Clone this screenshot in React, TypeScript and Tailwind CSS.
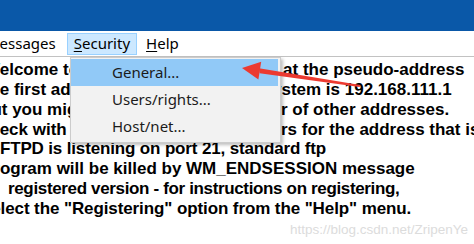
import React from "react"

const bodyFont = { fontFamily: '"Liberation Sans", Arial, sans-serif' }
const uiFont = { fontFamily: '"Noto Sans", "Open Sans", sans-serif' }

// lines that run under the dropdown: a left piece and a right piece
const splitLines = [
  { left: "Welcome to the FTP-Serv. It is now runnin", lm: "-ml-[16px]", right: "n at the pseudo-address", rm: "-ml-[13px]" },
  { left: "The first address of your sy", lm: "-ml-[21px]", right: "ystem is 192.168.111.1", rm: "-ml-[9px]" },
  { left: "but you might have a numbe", lm: "-ml-[19px]", right: "r of other addresses.", rm: "ml-0" },
  { left: "Check with your network admin", lm: "-ml-[23px]", right: "rs for the address that is", rm: "ml-0" },
]

const fullLines = [
  { text: "This FTPD is listening on port 21, standard ftp", cls: "-ml-[39px] tracking-[-0.15px]" },
  { text: "Program will be killed by WM_ENDSESSION message", cls: "-ml-[18px]" },
  { text: "registered version - for instructions on registering,", cls: "ml-[8px] tracking-[-0.35px]" },
  { text: "Select the \"Registering\" option from the \"Help\" menu.", cls: "-ml-[20px] tracking-[-0.1px]" },
]

const menuItems = ["General...", "Users/rights...", "Host/net..."]

export default function App() {
  return (
    <div className="relative w-[474px] h-[244px] overflow-hidden bg-white">
      {/* title bar */}
      <div className="h-[31px] bg-[#0a58a8]" />

      {/* menu bar */}
      <div className="h-[25px] flex items-center text-[15px] text-black" style={uiFont}>
        <span className="-ml-[14px] pr-[11px]">Messages</span>
        <span className="h-[22px] flex items-center px-[6px] bg-[#cce8ff] border border-[#99d1ff]">
          <span className="underline underline-offset-2 decoration-1">S</span>ecurity
        </span>
        <span className="ml-[9px]">
          <span className="underline underline-offset-2 decoration-1">H</span>elp
        </span>
      </div>

      {/* text area */}
      <div className="border-t border-[#c2c2c2] pt-[3px] text-[17px] font-bold leading-[19.85px] text-black" style={bodyFont}>
        {splitLines.map((l, i) => (
          <div key={i} className="flex whitespace-nowrap">
            <div className="w-[281px] shrink-0 overflow-hidden">
              <div className={l.lm}>{l.left}</div>
            </div>
            <div className={l.rm}>{l.right}</div>
          </div>
        ))}
        {fullLines.map((l, i) => (
          <div key={i} className={`whitespace-nowrap ${l.cls}`}>
            {l.text}
          </div>
        ))}
      </div>

      {/* dropdown */}
      <div
        className="absolute left-[70px] top-[57px] w-[211px] bg-[#f2f2f2] border border-[#cccccc] pt-[1px] pb-[2px] shadow-[2px_2px_3px_rgba(0,0,0,0.25)] text-[15px] text-[#1b1b1b]"
        style={uiFont}
      >
        {menuItems.map((m, i) => (
          <div
            key={m}
            className={`h-[27px] mr-[2px] flex items-center pl-[41px] ${i === 0 ? "bg-[#91c9f7]" : ""}`}
          >
            {m}
          </div>
        ))}
      </div>

      {/* red arrow */}
      <svg className="absolute left-0 top-0" width="474" height="244" viewBox="0 0 474 244">
        <polygon points="259,68.2 360.3,85 359.7,87 259.6,73.2" fill="#ec3a30" />
        <polygon points="242,68 261.2,61.8 258.4,79.6" fill="#ec3a30" />
      </svg>

      {/* watermark */}
      <div
        className="absolute left-[290px] top-[220px] text-[13.5px] text-[#dcdcdc] whitespace-nowrap"
        style={bodyFont}
      >
        https://blog.csdn.net/ZripenYe
      </div>
    </div>
  )
}
